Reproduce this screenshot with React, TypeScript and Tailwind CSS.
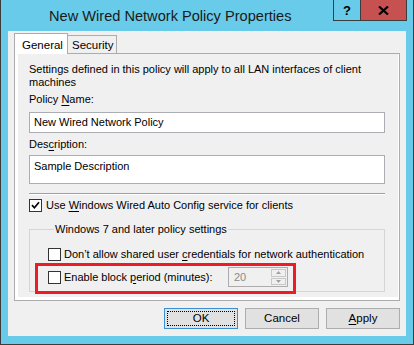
import React from "react";

const font = "font-['Liberation_Sans',Arial,sans-serif]";

function Check({ checked = false }: { checked?: boolean }) {
  return (
    <span className="w-[13px] h-[13px] border border-[#333333] bg-white flex items-center justify-center shrink-0">
      {checked && (
        <svg width="9" height="9" viewBox="0 0 9 9">
          <path d="M1 4.2 L3.4 6.8 L8 1.2" stroke="#000" strokeWidth="1.7" fill="none" />
        </svg>
      )}
    </span>
  );
}

function Btn({ children, focused = false }: { children: React.ReactNode; focused?: boolean }) {
  return (
    <div
      className={`w-[74px] h-[21px] bg-[#e1e1e1] border flex items-center justify-center relative text-[11.5px] text-black ${
        focused ? "border-[#3c8fd0]" : "border-[#adadad]"
      }`}
    >
      {focused && <div className="absolute inset-[2px] border border-dotted border-black" />}
      <span className="relative">{children}</span>
    </div>
  );
}

export default function App() {
  return (
    <div className={`${font} w-[414px] h-[345px] bg-[#68cbe9] border-x border-b border-[#3c3c3c] flex flex-col relative text-[11px] leading-[13px] text-black`}>
      {/* Title bar */}
      <div className="h-[31px] flex items-start shrink-0">
        <div className="flex-1 h-full flex items-center pl-[48px] text-[14.6px] leading-[18px] text-[#1a1a1a] whitespace-nowrap">
          New Wired Network Policy Properties
        </div>
        <div className="flex mr-[6px]">
          <div className="w-[28px] h-[21px] border-l border-b border-r border-[#3c3c3c] flex items-center justify-center text-[13px] font-bold text-black">
            ?
          </div>
          <div className="w-[46px] h-[21px] bg-[#c75050] border-r border-b border-[#3c3c3c] flex items-center justify-center text-black">
            <svg width="11" height="9" viewBox="0 0 11 9">
              <path d="M1 0.5 L10 8.5 M10 0.5 L1 8.5" stroke="#000" strokeWidth="2.2" />
            </svg>
          </div>
        </div>
      </div>

      {/* Client area */}
      <div className="mx-[7px] h-[305px] bg-[#f0f0f0] pl-[6px] pr-[6px] pt-[2px] flex flex-col">
        {/* Tabs */}
        <div className="h-[20px] flex items-end">
          <div className="w-[54px] h-[21px] -mb-px relative z-10 bg-white border-l border-t border-r border-[#acacac] pl-[7px] pt-[5px] text-[11.5px] leading-[13px]">
            General
          </div>
          <div className="w-[49px] h-[18px] bg-[#f0f0f0] border-t border-r border-[#acacac] pl-[4px] pt-[3px] text-[11.5px] leading-[13px]">
            Security
          </div>
        </div>

        {/* Panel */}
        <div className="w-[386px] h-[248px] border border-[#acacac] bg-white pl-[3px] pr-[1px] pb-[3px] flex flex-col">
          <div className="flex-1 bg-[#f0f0f0] pl-[11px] pr-[13px] pt-[9px] flex flex-col">
            <p className="whitespace-nowrap">
              Settings defined in this policy will apply to all LAN interfaces of client
              <br />
              machines
            </p>
            <div className="mt-[4px]">
              Policy <u className="underline-offset-2">N</u>ame:
            </div>
            <div className="mt-[6px] h-[21px] bg-white border border-[#abadb3] flex items-center pl-[4px]">
              New Wired Network Policy
            </div>
            <div className="mt-[5px]">
              Des<u className="underline-offset-2">c</u>ription:
            </div>
            <div className="mt-[4px] h-[29px] bg-white border border-[#abadb3] pl-[4px] pt-[4px]">
              Sample Description
            </div>
            <div className="mt-[9px] border-t border-[#a0a0a0] border-b border-b-white" />
            <div className="mt-[4px] flex items-center gap-[4px]">
              <Check checked />
              <span>
                Use <u className="underline-offset-2">W</u>indows Wired Auto Config service for clients
              </span>
            </div>

            <fieldset className="mt-[11px] border border-[#d5d5d5] pl-[18px] pb-[4px] pt-0 pr-0 m-0">
              <legend className="ml-[6px] px-[1px]">Windows 7 and later policy settings</legend>
              <div className="mt-[12px] flex items-center gap-[3px] h-[13px]">
                <Check />
                <span>
                  Don’t allow shared user <u className="underline-offset-2">c</u>redentials for network authentication
                </span>
              </div>
              <div className="mt-[6px] flex items-center h-[20px]">
                <Check />
                <span className="ml-[3px] w-[164px]">
                  Enable block <u className="underline-offset-2">p</u>eriod (minutes):
                </span>
                <div className="w-[60px] h-[20px] border border-[#acacac] bg-[#f0f0f0] flex items-center">
                  <span className="flex-1 pl-[5px] text-[#8a8a8a]">20</span>
                  <div className="w-[16px] h-[18px] flex flex-col gap-[1px] pr-[1px] py-[1px]">
                    <div className="flex-1 border border-[#c8c8c8] bg-[#f0f0f0] flex items-center justify-center">
                      <svg width="5" height="3" viewBox="0 0 5 3"><path d="M2.5 0 L5 3 L0 3 Z" fill="#a0a0a0" /></svg>
                    </div>
                    <div className="flex-1 border border-[#c8c8c8] bg-[#f0f0f0] flex items-center justify-center">
                      <svg width="5" height="3" viewBox="0 0 5 3"><path d="M0 0 L5 0 L2.5 3 Z" fill="#a0a0a0" /></svg>
                    </div>
                  </div>
                </div>
              </div>
            </fieldset>
          </div>
        </div>

        {/* Buttons */}
        <div className="mt-[7px] w-[386px] flex justify-end gap-[7px]">
          <Btn focused>OK</Btn>
          <Btn>Cancel</Btn>
          <Btn>
            <u className="underline-offset-2">A</u>pply
          </Btn>
        </div>
      </div>

      {/* Red annotation box */}
      <div className="absolute left-[34px] top-[263px] w-[261px] h-[31px] border-[3px] border-[#ed1c24] pointer-events-none" />
    </div>
  );
}
